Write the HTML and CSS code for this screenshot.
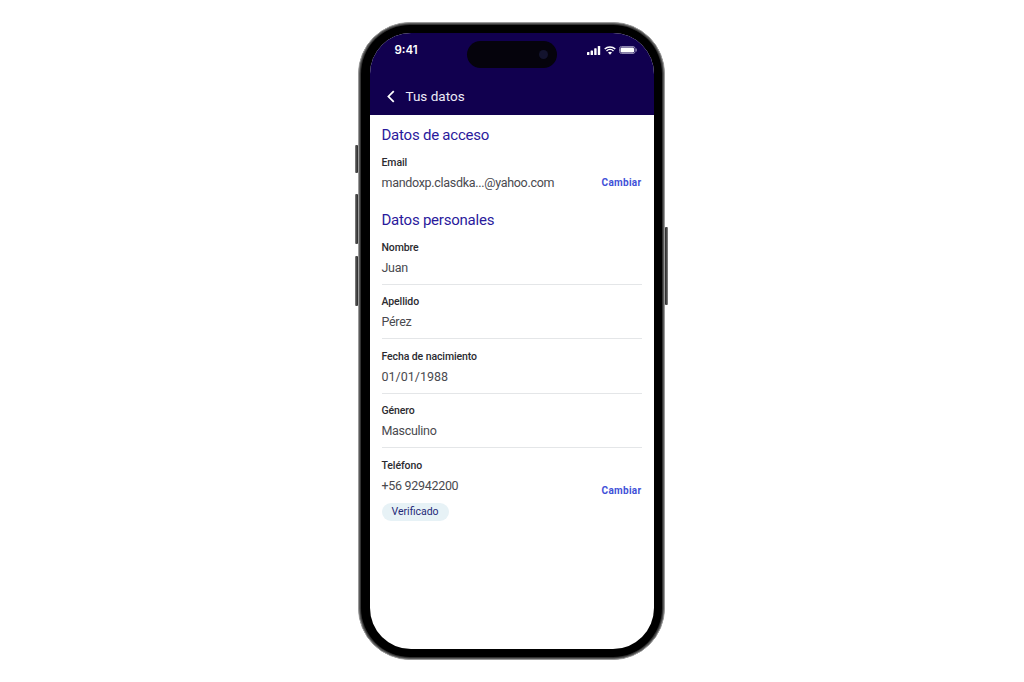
FILE: index.html
```html
<!DOCTYPE html>
<html lang="es">
<head>
<meta charset="utf-8">
<title>Tus datos</title>
<link rel="stylesheet" href="styles.css">
</head>
<body>
<div class="phone">
  <span class="btn btn-action"></span>
  <span class="btn btn-up"></span>
  <span class="btn btn-down"></span>
  <span class="btn btn-power"></span>
  <div class="bezel">
    <div class="screen">
      <header class="topbar">
        <div class="status">
          <span class="time">9:41</span>
          <div class="status-icons">
            <svg class="i-signal" viewBox="0 0 14 9"><rect x="0" y="6" width="2.4" height="3" rx=".6"/><rect x="3.6" y="4.4" width="2.4" height="4.6" rx=".6"/><rect x="7.2" y="2.2" width="2.4" height="6.8" rx=".6"/><rect x="10.8" y="0" width="2.4" height="9" rx=".6"/></svg>
            <svg class="i-wifi" viewBox="0 0 12 9"><path d="M.7 3.1a7.6 7.6 0 0 1 10.6 0M2.5 5a5 5 0 0 1 7 0" fill="none" stroke="#fff" stroke-width="1.4"/><path d="M4 6.6a2.9 2.9 0 0 1 4 0L6 8.8z" fill="#fff"/></svg>
            <svg class="i-batt" viewBox="0 0 18 8"><rect x=".5" y=".5" width="15.5" height="7" rx="2" fill="none" stroke="#8e86b0"/><rect x="1.5" y="1.5" width="13.5" height="5" rx="1.2" fill="#fff"/><rect x="16.6" y="2.6" width="1.2" height="2.8" rx=".5" fill="#8e86b0"/></svg>
          </div>
        </div>
        <div class="nav">
          <svg class="i-back" viewBox="0 0 9 14"><path d="M7.6 .9 1.6 7l6 6.1" fill="none" stroke="#fff" stroke-width="2"/></svg>
          <span class="nav-title">Tus datos</span>
        </div>
      </header>
      <main class="content">
        <h2 class="section-title">Datos de acceso</h2>
        <div class="row row-plain row-action row-email">
          <div>
            <div class="label">Email</div>
            <div class="value">mandoxp.clasdka...@yahoo.com</div>
          </div>
          <a class="change">Cambiar</a>
        </div>
        <h2 class="section-title section-second">Datos personales</h2>
        <div class="row"><div class="label">Nombre</div><div class="value">Juan</div></div>
        <div class="row"><div class="label">Apellido</div><div class="value">Pérez</div></div>
        <div class="row"><div class="label">Fecha de nacimiento</div><div class="value value-date">01/01/1988</div></div>
        <div class="row"><div class="label">Género</div><div class="value">Masculino</div></div>
        <div class="row row-plain row-action row-phone">
          <div>
            <div class="label">Teléfono</div>
            <div class="value">+56 92942200</div>
            <span class="tag">Verificado</span>
          </div>
          <a class="change">Cambiar</a>
        </div>
      </main>
    </div>
    <div class="island"><span class="lens"></span></div>
  </div>
</div>
</body>
</html>
```
FILE: styles.css
```css
* { box-sizing: border-box; }
html, body { margin: 0; height: 100%; background: #fff; }
body {
  width: 1024px;
  height: 682px;
  overflow: hidden;
  padding: 22px 0 0 358px;
  font-family: Roboto, "Liberation Sans", sans-serif;
}
.phone {
  position: relative;
  width: 307px;
  height: 638px;
  border-radius: 52px;
  background: #333;
  border: 1px solid #9a9a9a;
  padding: 2px;
  box-shadow: inset 0 0 0 1px #5a5a5a;
}
.btn {
  position: absolute;
  width: 3px;
  background: linear-gradient(90deg, #8a8a8a, #3c3c3c 60%, #2c2c2c);
  border-radius: 1px;
}
.btn-action { left: -4px; top: 122px; height: 28px; }
.btn-up { left: -4px; top: 171px; height: 50px; }
.btn-down { left: -4px; top: 233px; height: 50px; }
.btn-power { right: -4px; top: 204px; height: 78px; background: linear-gradient(270deg, #8a8a8a, #3c3c3c 60%, #2c2c2c); }
.bezel {
  position: relative;
  width: 100%;
  height: 100%;
  background: #000;
  border-radius: 49px;
  padding: 8px 8.5px;
}
.screen {
  width: 284px;
  height: 616px;
  border-radius: 41px;
  background: #fff;
  overflow: hidden;
  display: flex;
  flex-direction: column;
}
.island {
  position: absolute;
  left: 106px;
  top: 16px;
  width: 90px;
  height: 27px;
  border-radius: 14px;
  background: #05030c;
  display: flex;
  justify-content: flex-end;
  align-items: center;
  padding-right: 9px;
}
.lens {
  width: 9px;
  height: 9px;
  border-radius: 50%;
  background: #13132e;
}
.topbar {
  height: 82px;
  background: #11004f;
  color: #fff;
  flex: none;
}
.status {
  height: 35px;
  padding: 9px 17px 0 25px;
  display: flex;
  justify-content: space-between;
  align-items: flex-start;
}
.time {
  font-family: Inter, "Liberation Sans", sans-serif;
  font-size: 11.5px;
  font-weight: 600;
  line-height: 16px;
}
.status-icons {
  display: flex;
  align-items: center;
  gap: 3px;
  height: 16px;
}
.i-signal { width: 14px; height: 9px; fill: #fff; }
.i-wifi { width: 12px; height: 9px; }
.i-batt { width: 18px; height: 8px; }
.nav {
  height: 47px;
  padding: 9px 0 0 17px;
  display: flex;
  align-items: center;
  gap: 11px;
}
.i-back { width: 8px; height: 13px; }
.nav-title {
  font-size: 13.5px;
  color: #ece9f6;
}
.content {
  padding: 9px 12px 0 12px;
}
.section-title {
  margin: 0;
  font-size: 15px;
  font-weight: 400;
  line-height: 22px;
  letter-spacing: -.23px;
  color: #2a1a9c;
}
.section-second {
  margin-top: 11.4px;
  line-height: 20px;
}
.row {
  padding: 9.5px 0 6.1px;
  border-bottom: 1px solid #e4e6e8;
}
.row-plain { border-bottom: 0; }
.row-action {
  display: flex;
  justify-content: space-between;
}
.row-email {
  align-items: flex-end;
  padding-top: 8.6px;
}
.row-phone { align-items: center; }
.label {
  font-size: 10.5px;
  font-weight: 500;
  line-height: 16px;
  letter-spacing: -.1px;
  color: #2b2b30;
}
.value {
  margin-top: 2px;
  font-size: 12.5px;
  line-height: 20px;
  letter-spacing: -.3px;
  color: #4a4a4f;
}
.value-date { letter-spacing: 0; }
.change {
  font-size: 10px;
  font-weight: 700;
  line-height: 20px;
  color: #3f51d8;
  letter-spacing: .3px;
}
.row-phone .change { margin-top: 3px; }
.tag {
  display: inline-block;
  margin-top: 7px;
  height: 18px;
  padding: 0 10px;
  border-radius: 9px;
  background: #e7f2f6;
  color: #1f2a78;
  font-size: 10.5px;
  line-height: 18px;
}
```
